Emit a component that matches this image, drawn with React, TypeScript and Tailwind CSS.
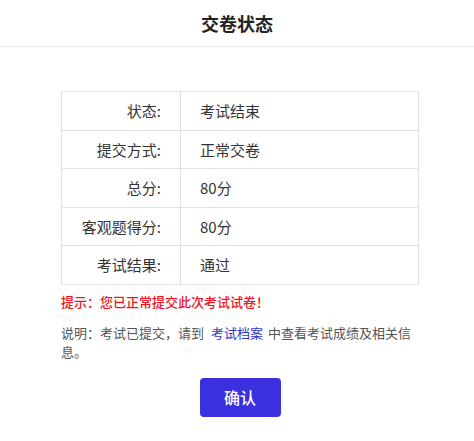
export default function App() {
  const rows = [
    { label: '状态:', value: '考试结束' },
    { label: '提交方式:', value: '正常交卷' },
    { label: '总分:', value: '80分' },
    { label: '客观题得分:', value: '80分' },
    { label: '考试结果:', value: '通过' },
  ]

  return (
    <div
      className="min-h-screen w-full bg-white text-[#333]"
      style={{ fontFamily: '"Noto Sans CJK SC", "Noto Sans", sans-serif' }}
    >
      {/* Header */}
      <div className="h-[47px] border-b border-[#ebebeb] flex items-center justify-center">
        <h1 className="text-[18px] font-bold text-[#222] leading-none">交卷状态</h1>
      </div>

      <div className="px-[61px] pt-[44px]">
        {/* Status table */}
        <table className="w-[358px] border-collapse text-[15px]">
          <tbody>
            {rows.map((r) => (
              <tr key={r.label} className="h-[38.5px]">
                <td className="w-[119px] border border-[#e0e0e0] text-right pr-[19px] leading-none">{r.label}</td>
                <td className="border border-[#e0e0e0] pl-[19px] leading-none">{r.value}</td>
              </tr>
            ))}
          </tbody>
        </table>

        {/* Hint */}
        <p className="mt-[7px] text-[13px] font-medium text-[#f0141e] leading-[20px]">
          提示：您已正常提交此次考试试卷！
        </p>

        {/* Description */}
        <p className="mt-[11px] w-[352px] text-[13px] text-[#555] leading-[19px]">
          说明：考试已提交，请到<span className="inline-block w-[4px]" /> <a className="text-[#3434c8]">考试档案</a> <span className="inline-block w-[2px]" />中查看考试成绩及相关信息。
        </p>

        {/* Confirm button */}
        <div className="flex justify-center mt-[17px] w-[358px]">
          <button className="w-[81px] h-[39px] rounded-[4px] bg-[#3a30e0] text-white text-[16px] font-medium">
            确认
          </button>
        </div>
      </div>
    </div>
  )
}
